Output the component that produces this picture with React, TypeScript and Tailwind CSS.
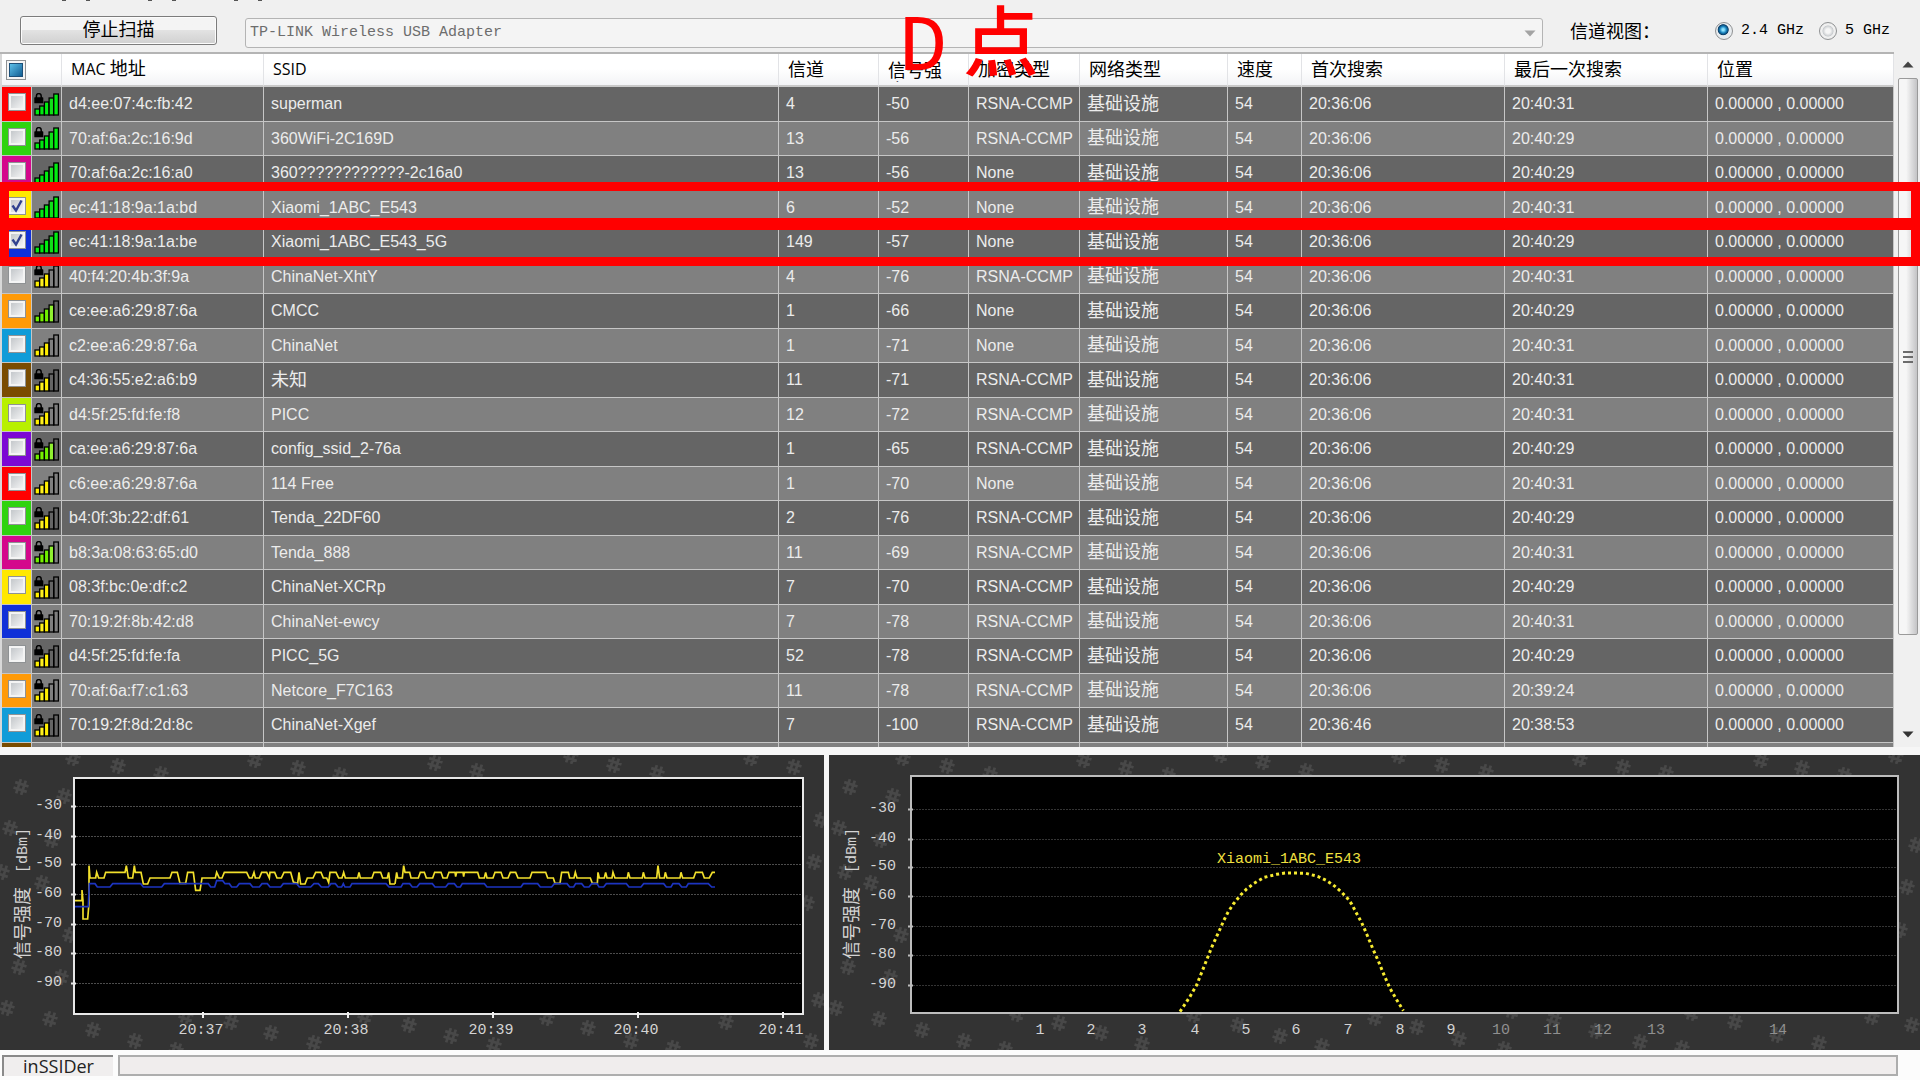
import React from "react";

const cjk = "font-['Open_Sans','Noto_Sans_CJK_SC',sans-serif]";
const mono = "font-['Liberation_Mono','Noto_Sans_CJK_SC',monospace]";

type Network = {
  color: string;
  mac: string;
  ssid: string;
  channel: string;
  rssi: string;
  locked: boolean;
  bars: 3 | 4 | 5;
  security: string;
  first: string;
  last: string;
  checked?: boolean;
};

const net = (
  color: string,
  mac: string,
  ssid: string,
  channel: string,
  rssi: string,
  bars: 3 | 4 | 5,
  locked: boolean,
  last: string,
  first = "20:36:06",
  checked = false,
): Network => ({
  color,
  mac,
  ssid,
  channel,
  rssi,
  bars,
  locked,
  security: locked ? "RSNA-CCMP" : "None",
  first,
  last,
  checked,
});

const networks: Network[] = [
  net("bg-[#ff0000]", "d4:ee:07:4c:fb:42", "superman", "4", "-50", 5, true, "20:40:31"),
  net("bg-[#2fd30f]", "70:af:6a:2c:16:9d", "360WiFi-2C169D", "13", "-56", 5, true, "20:40:29"),
  net("bg-[#d4088c]", "70:af:6a:2c:16:a0", "360????????????-2c16a0", "13", "-56", 5, false, "20:40:29"),
  net("bg-[#ffe800]", "ec:41:18:9a:1a:bd", "Xiaomi_1ABC_E543", "6", "-52", 5, false, "20:40:31", "20:36:06", true),
  net("bg-[#1030d8]", "ec:41:18:9a:1a:be", "Xiaomi_1ABC_E543_5G", "149", "-57", 5, false, "20:40:29", "20:36:06", true),
  net("bg-[#a0a0a0]", "40:f4:20:4b:3f:9a", "ChinaNet-XhtY", "4", "-76", 3, true, "20:40:31"),
  net("bg-[#ff9a08]", "ce:ee:a6:29:87:6a", "CMCC", "1", "-66", 4, false, "20:40:29"),
  net("bg-[#109cd8]", "c2:ee:a6:29:87:6a", "ChinaNet", "1", "-71", 3, false, "20:40:31"),
  net("bg-[#7a4c00]", "c4:36:55:e2:a6:b9", "未知", "11", "-71", 3, true, "20:40:31"),
  net("bg-[#b8f000]", "d4:5f:25:fd:fe:f8", "PICC", "12", "-72", 3, true, "20:40:31"),
  net("bg-[#7c08d4]", "ca:ee:a6:29:87:6a", "config_ssid_2-76a", "1", "-65", 4, true, "20:40:29"),
  net("bg-[#ff0000]", "c6:ee:a6:29:87:6a", "114 Free", "1", "-70", 3, false, "20:40:31"),
  net("bg-[#2fd30f]", "b4:0f:3b:22:df:61", "Tenda_22DF60", "2", "-76", 3, true, "20:40:29"),
  net("bg-[#d4088c]", "b8:3a:08:63:65:d0", "Tenda_888", "11", "-69", 4, true, "20:40:31"),
  net("bg-[#ffe800]", "08:3f:bc:0e:df:c2", "ChinaNet-XCRp", "7", "-70", 3, true, "20:40:29"),
  net("bg-[#1030d8]", "70:19:2f:8b:42:d8", "ChinaNet-ewcy", "7", "-78", 3, true, "20:40:31"),
  net("bg-[#a0a0a0]", "d4:5f:25:fd:fe:fa", "PICC_5G", "52", "-78", 3, true, "20:40:29"),
  net("bg-[#ff9a08]", "70:af:6a:f7:c1:63", "Netcore_F7C163", "11", "-78", 3, true, "20:39:24"),
  net("bg-[#109cd8]", "70:19:2f:8d:2d:8c", "ChinaNet-Xgef", "7", "-100", 3, true, "20:38:53", "20:36:46"),
];

function SignalIcon({ bars, locked }: { bars: 3 | 4 | 5; locked: boolean }) {
  const fills = {
    5: ["#00f010", "#00e810", "#00f010", "#10e018", "#00f010"],
    4: ["#70f000", "#78f000", "#70f000", "#90f030", "none"],
    3: ["#fff000", "#fff020", "#ffee00", "none", "none"],
  }[bars];
  const tops = [16, 13, 9, 5, 1];
  return (
    <svg width="25" height="23" viewBox="0 0 25 23" className="block">
      {tops.map((top, i) => (
        <rect
          key={i}
          x={1 + i * 4.7}
          y={top}
          width="4.6"
          height={22 - top}
          fill={fills[i]}
          stroke="#000"
          strokeWidth="1.3"
        />
      ))}
      {locked && (
        <g>
          <path d="M2.4 5V3a2.4 2.4 0 0 1 4.8 0V5" fill="none" stroke="#000" strokeWidth="1.5" />
          <rect x="0.3" y="4.3" width="9" height="6" rx="0.6" fill="#000" />
        </g>
      )}
    </svg>
  );
}

function RowCheckbox({ label, checked }: { label: string; checked?: boolean }) {
  return (
    <label className="relative mx-auto block size-[18px]">
      <input
        type="checkbox"
        aria-label={label}
        defaultChecked={checked}
        className="peer block size-[18px] appearance-none border border-[#8f9294] bg-linear-to-br from-[#bcc0c4] to-[#fbfbfb] shadow-[inset_0_0_0_2px_#f4f4f4]"
      />
      <svg viewBox="0 0 18 18" className="pointer-events-none absolute inset-0 hidden size-[18px] peer-checked:block">
        <path d="M4.5 8.5 8 13.5 13.5 3.5" fill="none" stroke="#31418f" strokeWidth="2.4" />
      </svg>
    </label>
  );
}

function Toolbar() {
  return (
    <div className="relative flex h-[52px] shrink-0 items-center bg-[#f0f0f0] pr-[30px] pl-5">
      <div className="absolute top-0 left-[62px] flex gap-[58px]">
        {[0, 1, 2].map((i) => (
          <div key={i} className="flex gap-5">
            <span className="h-px w-1 bg-[#555]" />
            <span className="h-px w-1 bg-[#555]" />
          </div>
        ))}
      </div>
      <button
        type="button"
        className={`${cjk} mt-[9px] flex h-[29px] w-[197px] items-center justify-center rounded-[3px] border border-[#7c7c7c] bg-linear-to-b from-[#f4f4f4] from-50% via-[#e2e2e2] via-50% to-[#d0d0d0] pb-1 text-lg leading-6 text-black shadow-[inset_0_0_0_1px_#fcfcfc]`}
      >
        停止扫描
      </button>
      <div className="relative mt-[14px] ml-7 h-[30px] min-w-0 flex-1">
        <select
          disabled
          aria-label="Adapter"
          className={`${mono} h-full w-full appearance-none rounded-[3px] border border-[#b4b4b4] bg-[#f4f4f4] px-1 text-[15px] text-[#6d6d6d] opacity-100`}
        >
          <option>TP-LINK Wireless USB Adapter</option>
        </select>
        <svg viewBox="0 0 12 7" className="pointer-events-none absolute top-3 right-[7px] h-[7px] w-3">
          <path d="M0.5 0.5h11L6 6.5z" fill="#a3a3a3" />
        </svg>
      </div>
      <div role="radiogroup" aria-labelledby="band-label" className="mt-[10px] flex items-center">
        <span id="band-label" className={`${cjk} ml-[27px] w-[145px] text-lg leading-6`}>
          信道视图：
        </span>
        <label className={`${mono} flex w-[104px] items-center gap-2 text-[15px]`}>
          <input
            type="radio"
            name="band"
            defaultChecked
            className="size-[18px] appearance-none rounded-full border border-[#8e9092] bg-[radial-gradient(circle,#f6f6f6_0_20%,#c9cccf_46%,#f0f0f0_52%)] checked:bg-[radial-gradient(circle_at_45%_42%,#8fe4ff_0_8%,#1681bd_26%,#0b3d66_40%,#e8ecef_46%)]"
          />
          2.4 GHz
        </label>
        <label className={`${mono} flex items-center gap-2 text-[15px]`}>
          <input
            type="radio"
            name="band"
            className="size-[18px] appearance-none rounded-full border border-[#8e9092] bg-[radial-gradient(circle,#f6f6f6_0_20%,#c9cccf_46%,#f0f0f0_52%)] checked:bg-[radial-gradient(circle_at_45%_42%,#8fe4ff_0_8%,#1681bd_26%,#0b3d66_40%,#e8ecef_46%)]"
          />
          5 GHz
        </label>
      </div>
    </div>
  );
}

const th =
  "h-[33px] border-r border-[#e2e3e6] p-0 pb-[2px] pl-[9px] text-left align-middle text-lg leading-6 font-normal whitespace-nowrap text-black";
const td = "border-r border-b border-[#c6c6c6] p-0 pl-[7px] whitespace-nowrap";

function NetworkTable() {
  return (
    <div className="min-w-0 flex-1 overflow-hidden border-t-2 border-[#b4b4b4] bg-[#d8d8d8] pl-[2px]">
      <table className="w-full table-fixed border-separate border-spacing-0">
        <colgroup>
          <col className="w-[30px]" />
          <col className="w-[30px]" />
          <col className="w-[202px]" />
          <col />
          <col className="w-[100px]" />
          <col className="w-[90px]" />
          <col className="w-[111px]" />
          <col className="w-[148px]" />
          <col className="w-[74px]" />
          <col className="w-[203px]" />
          <col className="w-[203px]" />
          <col className="w-[186px]" />
        </colgroup>
        <thead className={`${cjk} bg-linear-to-b from-white from-45% to-[#f1f2f5]`}>
          <tr className="[&>th]:border-b-2 [&>th]:border-b-[#c9c9c9]">
            <th className="h-[33px] p-0 pl-1">
              <span className="flex size-5 items-center justify-center border border-[#8f9294] bg-[#f4f4f4]">
                <input
                  type="checkbox"
                  aria-label="全选"
                  className="size-[14px] appearance-none border border-[#1c4f78] bg-linear-to-br from-[#5cc0e8] to-[#115f94]"
                />
              </span>
            </th>
            <th className={th} aria-label="信号图标" />
            <th className={th}>
              <span className="text-base leading-6">MAC </span>地址
            </th>
            <th className={th}>
              <span className="text-base leading-6">SSID</span>
            </th>
            <th className={th}>信道</th>
            <th className={th}>
              <div className="mt-1 h-[22px] w-[58px] overflow-hidden leading-5 whitespace-normal">信号强度</div>
            </th>
            <th className={th}>加密类型</th>
            <th className={th}>网络类型</th>
            <th className={th}>速度</th>
            <th className={th}>首次搜索</th>
            <th className={th}>最后一次搜索</th>
            <th className={th}>位置</th>
          </tr>
        </thead>
        <tbody className="font-['Liberation_Sans','Noto_Sans_CJK_SC',sans-serif] text-base leading-6 text-[#ececec]">
          {networks.map((n) => (
            <tr key={n.mac} className="h-[35px] odd:bg-[#656565] even:h-[34px] even:bg-[#808080]">
              <td className={`border-r border-b border-[#c6c6c6] p-0 pb-1 ${n.color}`}>
                <RowCheckbox label={n.mac} checked={n.checked} />
              </td>
              <td className="border-r border-b border-[#c6c6c6] p-0 pl-[2px]">
                <SignalIcon bars={n.bars} locked={n.locked} />
              </td>
              <td className={td}>{n.mac}</td>
              <td className={td}>{n.ssid === "未知" ? <span className="text-lg leading-6">{n.ssid}</span> : n.ssid}</td>
              <td className={td}>{n.channel}</td>
              <td className={td}>{n.rssi}</td>
              <td className={td}>{n.security}</td>
              <td className={td}>
                <span className="text-lg leading-6">基础设施</span>
              </td>
              <td className={td}>54</td>
              <td className={td}>{n.first}</td>
              <td className={td}>{n.last}</td>
              <td className={td}>0.00000 , 0.00000</td>
            </tr>
          ))}
          <tr className="h-[35px] bg-[#808080]">
            <td className="border-r border-[#c6c6c6] bg-[#7a4c00]" />
            {Array.from({ length: 11 }, (_, i) => (
              <td key={i} className="border-r border-[#c6c6c6]" />
            ))}
          </tr>
        </tbody>
      </table>
    </div>
  );
}

function Scrollbar() {
  return (
    <div className="flex w-[26px] shrink-0 flex-col items-center bg-[#f0f0f0] pt-[9px] pr-[2px] pb-[9px] pl-1">
      <svg viewBox="0 0 12 7" className="mb-[10px] h-[7px] w-3">
        <path d="M0.5 6.5h11L6 0.5z" fill="#444" />
      </svg>
      <div className="flex w-5 flex-[558] items-center justify-center rounded-[2px] border border-[#9a9a9a] bg-linear-to-r from-[#f6f6f6] from-40% to-[#c4c4c6]">
        <div className="flex flex-col gap-[3px]">
          <span className="h-[2px] w-[10px] bg-[#6c6c6c]" />
          <span className="h-[2px] w-[10px] bg-[#6c6c6c]" />
          <span className="h-[2px] w-[10px] bg-[#6c6c6c]" />
        </div>
      </div>
      <div className="flex-[96]" />
      <svg viewBox="0 0 12 7" className="h-[7px] w-3">
        <path d="M0.5 0.5h11L6 6.5z" fill="#333" />
      </svg>
    </div>
  );
}

type Point = [number, number];

function HashMarks({ points }: { points: Point[] }) {
  return (
    <g fill="none" stroke="#484848" strokeWidth="2.8">
      {points.map(([x, y], i) => (
        <path
          key={i}
          transform={`translate(${x} ${y}) rotate(18)`}
          d="M-2.6 -7.5V7.5M2.6 -7.5V7.5M-7 -2.8H7M-7 2.8H7"
        />
      ))}
    </g>
  );
}

const leftMarks: Point[] = [
  [73, 3], [118, 11], [161, 19], [255, 5], [298, 13], [340, 20], [435, 8], [477, 16], [571, 1], [614, 10],
  [657, 18], [751, 3], [794, 12], [21, 32], [64, 41], [10, 73], [52, 85], [2, 117], [42, 128], [70, 180],
  [19, 212], [61, 222], [7, 253], [50, 264], [93, 275], [135, 286], [176, 295], [231, 267], [271, 278],
  [314, 288], [409, 270], [451, 281], [494, 290], [547, 263], [588, 273], [631, 286], [673, 293], [726, 267],
  [821, 65], [814, 107], [807, 148], [819, 245], [811, 286], [186, 261], [365, 261],
];

const rightMarks: Point[] = [
  [74, 3], [118, 11], [161, 19], [255, 5], [297, 13], [339, 20], [392, 0], [434, 7], [477, 16], [570, 1],
  [613, 10], [657, 17], [751, 4], [794, 12], [837, 18], [932, 5], [973, 13], [1015, 20], [1067, 1], [21, 32],
  [64, 41], [10, 73], [52, 85], [16, 117], [42, 128], [72, 180], [19, 212], [61, 222], [7, 253], [50, 264],
  [93, 275], [135, 286], [176, 294], [188, 259], [230, 268], [272, 278], [313, 289], [365, 260], [409, 270],
  [451, 281], [493, 291], [546, 263], [588, 272], [630, 284], [675, 294], [683, 256], [725, 264], [767, 276],
  [811, 287], [853, 293], [863, 258], [906, 267], [948, 280], [990, 288], [1043, 262], [1087, 90],
  [1078, 132], [1071, 175], [1083, 270],
];

const yellowTrace =
  "15,152 36,152 36,120 39,152 39,207 53,207 57,160 57,47 60,84 77,84 80,67 86,84 102,84 107,67 165,67 169,47 175,84 188,84 193,47 196,67 213,67 220,102 233,102 240,84 300,84 306,67 322,67 330,100 347,100 353,67 370,67 377,121 390,121 396,84 436,84 440,67 448,84 456,84 463,67 530,67 538,84 546,84 552,67 556,84 568,84 575,67 590,67 598,84 600,67 614,67 621,84 634,84 642,67 662,67 670,96 683,100 687,67 692,102 705,102 712,84 729,84 737,67 753,67 760,84 770,84 776,98 780,67 798,67 806,84 816,84 821,67 826,84 863,84 867,67 871,84 906,84 912,67 932,67 938,84 952,84 956,67 960,102 975,102";
const yellowTraceLate =
  "0,102 5,67 8,84 22,84 26,47 30,67 44,67 48,84 70,84 76,67 88,67 94,84 113,84 119,67 138,67 144,84 156,84 162,67 180,67 182,80 185,67 204,67 206,80 208,67 248,67 253,84 268,84 272,67 276,84 294,84 300,67 318,67 324,84 339,84 346,67 362,67 369,84 405,84 411,67 452,67 458,84 475,84 480,100 495,100 500,67 520,67 524,84 537,84 541,67 546,84 586,84 592,100 607,100 609,67 613,84 628,84 632,67 636,84 651,84 654,67 660,84 697,84 700,67 705,84 742,84 745,67 750,84 785,84 789,47 794,84 808,84 811,67 816,84 855,84 858,67 863,84 896,84 902,67 922,67 928,84 943,84 952,67 960,67";
const blueTrace =
  "15,170 55,170 58,101 75,101 82,111 120,111 128,101 212,101 220,111 275,111 283,101 415,101 422,111 434,111 440,92 458,92 465,101 478,101 485,111 500,111 508,101 540,101 548,111 568,111 576,101 592,101 600,111 632,111 640,101 680,101 688,111 722,111 732,101 745,101 754,111 775,111 783,101 796,101 804,111 815,111 820,101 825,111 840,111 846,101 948,101 957,111 975,111";
const blueTraceLate =
  "0,111 18,111 24,101 44,101 52,111 66,111 74,101 112,101 120,111 152,111 160,101 178,101 186,111 196,111 202,101 268,101 276,111 378,111 385,101 428,101 436,111 470,111 478,101 516,101 524,111 536,111 542,101 560,101 568,111 582,111 590,101 606,101 612,111 626,111 634,101 694,101 702,111 738,111 746,101 806,101 814,111 828,111 834,101 852,101 860,111 874,111 880,101 940,101 950,111 960,111";

const levels = ["-30", "-40", "-50", "-60", "-70", "-80", "-90"];

type FrameProps = {
  left: number;
  right: number;
  top: number;
  bottom: number;
  rows: number[];
  labelEnd: number;
  stroke: string;
  grid: string;
};

function PlotFrame({ left, right, top, bottom, rows, labelEnd, stroke, grid }: FrameProps) {
  return (
    <g>
      <rect x={left} y={top} width={right - left} height={bottom - top} fill="#000" stroke={stroke} strokeWidth="2" />
      {rows.map((y, i) => (
        <g key={y}>
          <line x1={left + 2} x2={right - 2} y1={y + 0.5} y2={y + 0.5} stroke={grid} strokeDasharray="2 1" />
          <line x1={left - 3} x2={left + 2} y1={y + 0.5} y2={y + 0.5} stroke={stroke} strokeWidth="2" />
          <text x={labelEnd} y={y + 3} textAnchor="end" fontSize="15" fill="#d4d4d4">
            {levels[i]}
          </text>
        </g>
      ))}
      <text transform="translate(29 204) rotate(-90)" fontSize="18" fill="#d4d4d4">
        信号强度
      </text>
      <text transform="translate(27 118) rotate(-90)" fontSize="15" fill="#d4d4d4">
        [dBm]
      </text>
    </g>
  );
}

function TimeChart() {
  return (
    <svg
      viewBox="0 0 824 295"
      role="img"
      aria-label="信号强度时间图"
      className={`${mono} block h-full min-w-0 flex-[824] bg-[#333333]`}
    >
      <HashMarks points={leftMarks} />
      <PlotFrame
        left={74}
        right={803}
        top={23}
        bottom={259}
        rows={[51, 81, 109, 139, 169, 198, 228]}
        labelEnd={62}
        stroke="#e8e8e8"
        grid="#4c4c4c"
      />
      {["20:37", "20:38", "20:39", "20:40", "20:41"].map((t, i) => (
        <g key={t}>
          <line x1={203 + i * 145} x2={203 + i * 145} y1="257" y2="263" stroke="#f0f0f0" strokeWidth="2" />
          <text x={201 + i * 145} y="279" textAnchor="middle" fontSize="15" fill="#d4d4d4">
            {t}
          </text>
        </g>
      ))}
      <g transform="translate(70 95) scale(0.33333)" fill="none" strokeWidth="5">
        <polyline points={yellowTrace} stroke="#f2e02c" />
        <polyline points={yellowTraceLate} transform="translate(975 0)" stroke="#f2e02c" />
        <polyline points={blueTrace} stroke="#1c34c0" />
        <polyline points={blueTraceLate} transform="translate(975 0)" stroke="#1c34c0" />
      </g>
    </svg>
  );
}

const channels: Point[] = [
  [1, 211], [2, 262], [3, 313], [4, 366], [5, 417], [6, 467], [7, 519], [8, 571], [9, 622], [10, 672], [11, 723],
  [12, 774], [13, 827], [14, 949],
];

function ChannelChart() {
  return (
    <svg
      viewBox="0 0 1091 295"
      role="img"
      aria-label="信道图"
      className={`${mono} block h-full min-w-0 flex-[1091] bg-[#333333]`}
    >
      <HashMarks points={rightMarks} />
      <PlotFrame
        left={82}
        right={1069}
        top={21}
        bottom={258}
        rows={[54, 84, 112, 141, 171, 200, 230]}
        labelEnd={67}
        stroke="#bdbdbd"
        grid="#343434"
      />
      {channels.map(([n, x]) => (
        <text key={n} x={x} y="279" textAnchor="middle" fontSize="15" fill={n < 10 ? "#d4d4d4" : "#8f8f8f"}>
          {n}
        </text>
      ))}
      <text x="460" y="108" textAnchor="middle" fontSize="15" fill="#f0e040">
        Xiaomi_1ABC_E543
      </text>
      <polyline
        transform="translate(191 -15) scale(0.33333)"
        points="480,815 508,773 530,735 552,680 575,622 598,572 612,540 625,515 640,492 662,465 680,447 702,430 733,412 770,403 795,399 822,399 858,400 893,409 918,421 940,435 963,455 980,472 995,492 1008,517 1025,548 1040,582 1058,625 1075,663 1093,707 1110,745 1128,776 1150,812"
        fill="none"
        stroke="#f6ea30"
        strokeWidth="9"
        strokeDasharray="9 9"
      />
    </svg>
  );
}

function StatusBar() {
  return (
    <div className="flex h-[30px] shrink-0 gap-[5px] bg-[#fcfcfc] pt-[5px] pr-[22px] pb-1 pl-[2px]">
      <div
        className={`${cjk} flex w-[111px] items-center justify-center border-t-2 border-l-2 border-[#8a8a8a] bg-[#f0eeee] text-lg leading-[19px] text-[#222]`}
      >
        inSSIDer
      </div>
      <div className="flex-1 border-2 border-[#adadad] bg-[#f0eded]" />
    </div>
  );
}

export default function App() {
  return (
    <div className="relative flex h-screen min-w-0 flex-col overflow-hidden bg-[#f4f4f4] text-black">
      <Toolbar />
      <div className="flex min-h-0 flex-1">
        <NetworkTable />
        <Scrollbar />
      </div>
      <div className="flex h-[303px] shrink-0 gap-[5px] bg-[#f6f6f6] pt-2">
        <TimeChart />
        <ChannelChart />
      </div>
      <StatusBar />
      <div className="pointer-events-none absolute inset-x-0 top-[182px] h-[45px] border-[9px] border-[#ff0000]" />
      <div className="pointer-events-none absolute inset-x-0 top-[221px] h-[45px] border-[9px] border-[#ff0000]" />
      <div className="pointer-events-none absolute top-0 left-[899px] flex items-baseline gap-4 leading-[74px] text-[#ff0000]">
        <span className="font-['Liberation_Mono',monospace] text-[80px]">D</span>
        <span className="font-['Noto_Sans_CJK_SC',sans-serif] text-[76px] font-medium">点</span>
      </div>
    </div>
  );
}
